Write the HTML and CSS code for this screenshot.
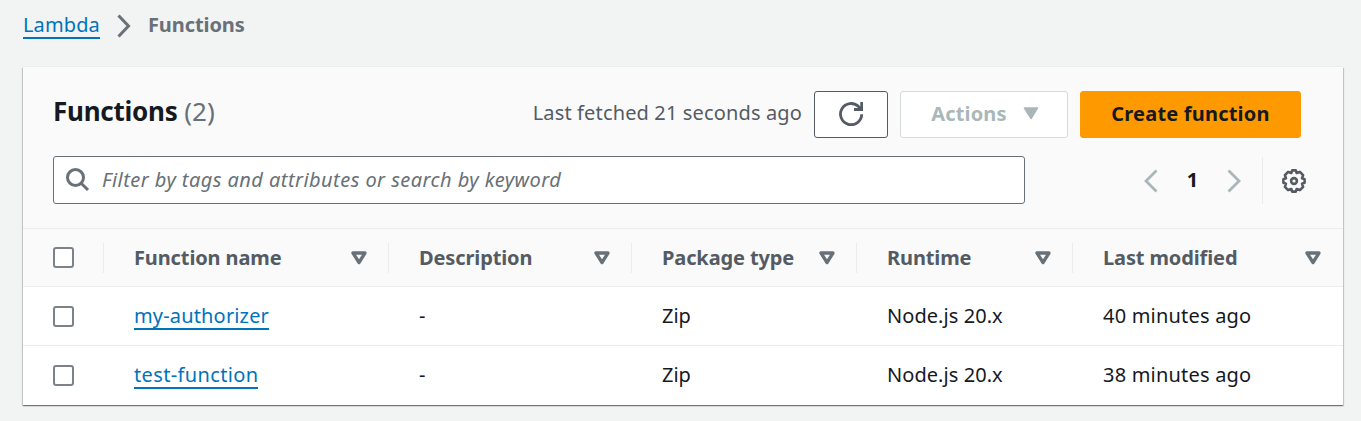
FILE: index.html
```html
<!DOCTYPE html>
<html lang="en">
<head>
<meta charset="utf-8">
<title>Functions - Lambda</title>
<link rel="stylesheet" href="styles.css">
</head>
<body>
<nav class="breadcrumbs">
  <a class="link w-lambda" href="#">Lambda</a>
  <svg class="crumb-sep" viewBox="0 0 14 24"><path d="M1.5 1.5 L11.5 12 L1.5 22.5"/></svg>
  <span class="crumb-current">Functions</span>
</nav>
<main class="panel">
  <header class="panel-header">
    <div class="title-row">
      <h1 class="title"><span class="title-text">Functions</span> <span class="count">(2)</span></h1>
      <div class="actions">
        <span class="fetched">Last fetched 21 seconds ago</span>
        <button class="btn btn-refresh" aria-label="Refresh"><svg class="icon" viewBox="0 0 24 24"><path d="M22.7 12.2A10.6 10.6 0 1 1 19.6 4.6L21.8 7M22.7 0V7.5H15"/></svg></button>
        <button class="btn btn-disabled" disabled><span>Actions</span><svg class="caret" viewBox="0 0 16 13"><path d="M1.5 1H14.5L8 11.5Z"/></svg></button>
        <button class="btn btn-primary">Create function</button>
      </div>
    </div>
    <div class="filter-row">
      <label class="search">
        <svg class="search-icon" viewBox="0 0 24 24"><circle cx="9.5" cy="9.5" r="8"/><path d="M15.2 15.2L22 22"/></svg>
        <span class="placeholder">Filter by tags and attributes or search by keyword</span>
      </label>
      <div class="pager">
        <svg class="page-arrow" viewBox="0 0 14 24"><path d="M12.5 1.5L2 12L12.5 22.5"/></svg>
        <span class="page">1</span>
        <svg class="page-arrow" viewBox="0 0 14 24"><path d="M1.5 1.5L12 12L1.5 22.5"/></svg>
        <div class="settings"><svg class="icon gear" viewBox="0 0 24 24"><path d="M10.2 1.4H13.8L14.7 4L17.9 2.9L21.1 6.1L20 9.3L22.6 10.2V13.8L20 14.7L21.1 17.9L17.9 21.1L14.7 20L13.8 22.6H10.2L9.3 20L6.1 21.1L2.9 17.9L4 14.7L1.4 13.8V10.2L4 9.3L2.9 6.1L6.1 2.9L9.3 4Z"/><circle cx="12" cy="12" r="2.9"/></svg></div>
      </div>
    </div>
  </header>
  <div class="row head">
    <div class="cell check"><span class="box"></span></div>
    <div class="cell"><span>Function name</span><svg class="sort" viewBox="0 0 16 14"><path d="M2 2H14L8 11.5Z"/></svg></div>
    <div class="cell"><span>Description</span><svg class="sort" viewBox="0 0 16 14"><path d="M2 2H14L8 11.5Z"/></svg></div>
    <div class="cell"><span>Package type</span><svg class="sort" viewBox="0 0 16 14"><path d="M2 2H14L8 11.5Z"/></svg></div>
    <div class="cell"><span>Runtime</span><svg class="sort" viewBox="0 0 16 14"><path d="M2 2H14L8 11.5Z"/></svg></div>
    <div class="cell"><span>Last modified</span><svg class="sort" viewBox="0 0 16 14"><path d="M2 2H14L8 11.5Z"/></svg></div>
  </div>
  <div class="row">
    <div class="cell check"><span class="box"></span></div>
    <div class="cell"><a class="link w-auth" href="#">my-authorizer</a></div>
    <div class="cell">-</div>
    <div class="cell">Zip</div>
    <div class="cell node">Node.js 20.x</div>
    <div class="cell ago">40 minutes ago</div>
  </div>
  <div class="row">
    <div class="cell check"><span class="box"></span></div>
    <div class="cell"><a class="link w-test" href="#">test-function</a></div>
    <div class="cell">-</div>
    <div class="cell">Zip</div>
    <div class="cell node">Node.js 20.x</div>
    <div class="cell ago">38 minutes ago</div>
  </div>
</main>
</body>
</html>
```
FILE: styles.css
```css
* { box-sizing: border-box; }
body {
  margin: 0;
  height: 421px;
  overflow: hidden;
  background: #f2f3f3;
  color: #16191f;
  font: 20px/28px "Noto Sans", "Open Sans", sans-serif;
}
svg { display: block; flex: none; fill: none; stroke: #545b64; stroke-width: 2.8; }
.breadcrumbs { display: flex; align-items: center; height: 51px; padding-left: 23px; }
.link { color: #0073bb; text-decoration: none; line-height: 25px; border-bottom: 2px solid #0073bb; white-space: nowrap; }
.w-lambda { letter-spacing: .12px; }
.w-auth { letter-spacing: .16px; }
.w-test { letter-spacing: .36px; }
.crumb-sep { width: 14px; height: 24px; margin-left: 17px; stroke: #687078; stroke-width: 3; }
.crumb-current { margin-left: 17px; padding-bottom: 2px; font-weight: 700; letter-spacing: -.08px; color: #687078; }
.panel {
  width: 1320px;
  height: 338px;
  margin: 16px 0 0 23px;
  background: #fff;
  box-shadow: 0 -1px 0 0 #eaeded, 0 1px 1px 0 rgba(0,28,36,.4), 1px 1px 1px 0 rgba(0,28,36,.15), -1px 1px 1px 0 rgba(0,28,36,.15);
}
.panel-header { height: 162px; padding: 24px 37px 0 30px; background: #fafafa; border-bottom: 1px solid #eaeded; }
.title-row { display: flex; justify-content: space-between; height: 47px; padding-right: 5px; }
.title { margin: 0; font-size: 26px; line-height: 41px; white-space: nowrap; }
.title-text { letter-spacing: -.25px; }
.count { font-weight: 400; color: #687078; }
.actions { display: flex; gap: 12px; white-space: nowrap; }
.fetched { line-height: 43px; letter-spacing: .14px; color: #545b64; }
.btn {
  display: flex; align-items: center; justify-content: center;
  height: 47px; padding: 0 0 2px; border: 1px solid #545b64; border-radius: 3px; background: #fff;
  font: 700 20px/28px "Noto Sans", "Open Sans", sans-serif; color: #545b64; white-space: nowrap;
}
.icon { width: 24px; height: 24px; }
.btn-refresh { width: 74px; }
.btn-disabled { width: 168px; gap: 16px; padding-left: 2px; letter-spacing: .15px; border-color: #d5dbdb; color: #aab7b8; }
.caret { width: 16px; height: 13px; fill: #aab7b8; stroke: #aab7b8; stroke-width: 1.5; stroke-linejoin: round; }
.btn-primary { width: 221px; letter-spacing: .2px; background: #f90; border-color: #f90; color: #16191f; }
.filter-row { display: flex; justify-content: space-between; margin-top: 18px; height: 48px; }
.search { display: flex; align-items: center; width: 972px; border: 1px solid #687078; border-radius: 3px; background: #fff; padding-left: 12px; }
.search-icon { width: 24px; height: 24px; stroke: #687078; stroke-width: 3; }
.placeholder { margin-left: 12px; font-style: italic; letter-spacing: .45px; color: #687078; white-space: nowrap; }
.pager { display: flex; align-items: center; }
.page-arrow { width: 14px; height: 24px; stroke: #aab7b8; margin-top: 2px; }
.page { width: 69px; text-align: center; font-weight: 700; }
.settings { display: flex; align-items: center; width: 44px; height: 47px; margin: 1px 0 0 21px; padding-left: 19px; border-left: 1px solid #eaeded; }
.gear { stroke-width: 2.6; stroke-linejoin: round; }
.row { display: grid; grid-template-columns: 81px 285px 243px 225px 216px 270px; height: 59px; border-bottom: 1px solid #eaeded; }
.row:last-child { border-bottom-color: transparent; }
.cell { display: flex; align-items: center; padding-left: 30px; white-space: nowrap; }
.node { letter-spacing: .06px; }
.ago { letter-spacing: .2px; }
.head { height: 58px; background: #fafafa; font-weight: 700; letter-spacing: -.12px; color: #545b64; }
.head .cell { align-self: center; height: 30px; justify-content: space-between; padding-right: 21px; border-right: 1px solid #eaeded; }
.head .cell:last-child { border-right: 0; padding-right: 22px; }
.sort { width: 16px; height: 14px; stroke: #687078; stroke-width: 3.3; stroke-linejoin: round; }
.box { width: 21px; height: 21px; border: 2px solid #7b8289; border-radius: 3px; background: #fff; }
```
